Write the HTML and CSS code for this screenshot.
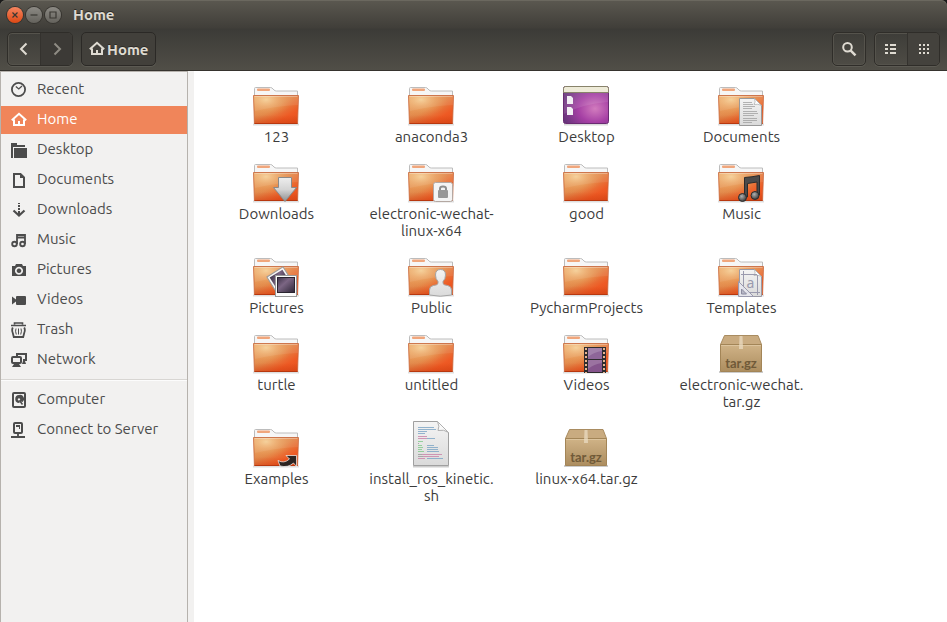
FILE: index.html
```
<!DOCTYPE html>
<html lang="en">
<head>
    <meta charset="UTF-8">
    <meta name="viewport" content="width=device-width, initial-scale=1.0">
    <title>Home</title>
    <link rel="stylesheet" href="styles.css">
</head>
<body>
    <!-- Shared icon parts -->
    <svg class="defs" width="0" height="0" aria-hidden="true">
        <defs>
            <linearGradient id="front" x1="0" y1="0" x2="1" y2="1">
                <stop offset="0" stop-color="#e9a263"/>
                <stop offset=".45" stop-color="#e2884a"/>
                <stop offset=".75" stop-color="#ee5a24"/>
                <stop offset="1" stop-color="#e4501c"/>
            </linearGradient>
            <radialGradient id="glow" cx=".28" cy=".15" r=".6">
                <stop offset="0" stop-color="#f8dca4" stop-opacity=".8"/>
                <stop offset="1" stop-color="#f0a050" stop-opacity="0"/>
            </radialGradient>
            <linearGradient id="shade" x1="0" y1="0" x2="0" y2="1">
                <stop offset=".7" stop-color="#d03c0c" stop-opacity="0"/>
                <stop offset="1" stop-color="#cc3c10" stop-opacity=".5"/>
            </linearGradient>
            <linearGradient id="paper" x1="0" y1="0" x2="0" y2="1">
                <stop offset="0" stop-color="#f4f4f4"/>
                <stop offset="1" stop-color="#dadada"/>
            </linearGradient>
            <linearGradient id="metal" x1="0" y1="0" x2="0" y2="1">
                <stop offset="0" stop-color="#eeeeee"/>
                <stop offset=".5" stop-color="#d4d4d4"/>
                <stop offset="1" stop-color="#8e8e8e"/>
            </linearGradient>
            <radialGradient id="purple" cx=".7" cy=".6" r=".75">
                <stop offset="0" stop-color="#d27cbe"/>
                <stop offset=".5" stop-color="#a53fa4"/>
                <stop offset="1" stop-color="#66347a"/>
            </radialGradient>
            <linearGradient id="photo" x1="0" y1="0" x2="1" y2="1">
                <stop offset="0" stop-color="#3c3246"/>
                <stop offset=".4" stop-color="#7c6684"/>
                <stop offset="1" stop-color="#2c2636"/>
            </linearGradient>
            <linearGradient id="carton" x1="0" y1="0" x2="0" y2="1">
                <stop offset="0" stop-color="#d0b387"/>
                <stop offset="1" stop-color="#ac8d5f"/>
            </linearGradient>
            <radialGradient id="bead" cx=".4" cy=".35" r=".6">
                <stop offset="0" stop-color="#b0b0b0"/>
                <stop offset="1" stop-color="#454545"/>
            </radialGradient>
        </defs>

        <symbol id="folder" viewBox="0 0 48 48">
            <path d="M1 46.500h46" stroke="#000" stroke-opacity=".13" stroke-width="2"/>
            <path d="M2.500 18V10.500q0-1 1-1H18.500q1.500 0 2.500 1.500l1 1q1 1 2.500 1H45.500V18z" fill="#f6f6f6" stroke="#bcbcbc"/>
            <rect x="5" y="10.500" width="13" height="2.500" rx="1" fill="#f0a67c"/>
            <path d="M1.500 17.500h45L45.600 45.500H2.400z" fill="url(#front)"/>
            <path d="M1.500 17.500h45L45.600 45.500H2.400z" fill="url(#glow)"/>
            <path d="M1.500 17.500h45L45.600 45.500H2.400z" fill="url(#shade)" stroke="#c8673c" stroke-opacity=".8"/>
            <path d="M2 18h44v9Q24 28 3 33z" fill="#fff" fill-opacity=".08"/>
            <path d="M2.500 18.500h43" stroke="#fff" stroke-opacity=".3"/>
            <path d="M2.500 45.500h43" stroke="#b8380f"/>
        </symbol>

        <symbol id="box" viewBox="0 0 48 48">
            <path d="M2 46h44" stroke="#000" stroke-opacity=".2" stroke-width="2"/>
            <path d="M7.500 9.500h33.500l3.500 9H3.500z" fill="#c9ab80" stroke="#a98c61"/>
            <path d="M3.500 18.500h41V45.500h-41z" fill="url(#carton)" stroke="#a38557"/>
            <path d="M4 19.500h40" stroke="#dcc49e"/>
            <path d="M22.500 10h3l.5 13h-4z" fill="#eadbc2" fill-opacity=".75"/>
        </symbol>

        <symbol id="house" viewBox="0 0 16 16">
            <path d="M.8 8.300L8 1.800l7.200 6.500M3 7.500V13h10V7.500" fill="none" stroke="currentColor" stroke-width="2"/>
            <path d="M7 13V9h2v4z" fill="currentColor"/>
        </symbol>
    </svg>

    <div class="window">
        <header class="header">
            <div class="titlebar">
                <button class="wm wm-close" aria-label="Close"><svg viewBox="0 0 16 16"><path d="M5.500 5.500l5 5M10.500 5.500l-5 5"/></svg></button>
                <button class="wm" aria-label="Minimize"><svg viewBox="0 0 16 16"><path d="M4.500 8h7"/></svg></button>
                <button class="wm" aria-label="Maximize"><svg viewBox="0 0 16 16"><path d="M5 5h6v6H5z"/></svg></button>
                <h1>Home</h1>
            </div>
            <div class="toolbar">
                <div class="group">
                    <button class="tool" aria-label="Back"><svg viewBox="0 0 16 16"><path d="M10.500 2.500L5 8l5.500 5.500" fill="none" stroke="currentColor" stroke-width="2"/></svg></button>
                    <button class="tool dim" aria-label="Forward"><svg viewBox="0 0 16 16"><path d="M5.500 2.500L11 8l-5.500 5.500" fill="none" stroke="currentColor" stroke-width="2"/></svg></button>
                </div>
                <button class="path"><svg viewBox="0 0 16 16"><use href="#house"/></svg>Home</button>
                <div class="group search">
                    <button class="tool" aria-label="Search"><svg viewBox="0 0 16 16"><circle cx="6.500" cy="6.200" r="4.300" fill="none" stroke="currentColor" stroke-width="2"/><path d="M9.500 9.300l5 5" stroke="currentColor" stroke-width="2.400"/></svg></button>
                </div>
                <div class="group">
                    <button class="tool" aria-label="List view"><svg viewBox="0 0 16 16"><path d="M2 3h3v2H2zM7 3h6v2H7zM2 7h3v2H2zM7 7h6v2H7zM2 11h3v2H2zM7 11h6v2H7z" fill="currentColor"/></svg></button>
                    <button class="tool active" aria-label="Icon view"><svg viewBox="0 0 16 16"><path d="M3 3h2v2H3zM7 3h2v2H7zM11 3h2v2h-2zM3 7h2v2H3zM7 7h2v2H7zM11 7h2v2h-2zM3 11h2v2H3zM7 11h2v2H7zM11 11h2v2h-2z" fill="currentColor"/></svg></button>
                </div>
            </div>
        </header>

        <div class="main">
            <nav class="sidebar">
                <a href="#"><svg viewBox="0 0 16 16"><circle cx="7.500" cy="7.500" r="6.600" fill="none" stroke="currentColor" stroke-width="1.800"/><path d="M4.800 4.500l3 2.500 3.200-3" fill="none" stroke="currentColor" stroke-width="1.300"/></svg>Recent</a>
                <a href="#" class="selected"><svg viewBox="0 0 16 16"><use href="#house"/></svg>Home</a>
                <a href="#"><svg viewBox="0 0 16 16"><path d="M0 1h6v2h8v2H2v11H0zM3 6h13v10H3z" fill="currentColor"/></svg>Desktop</a>
                <a href="#"><svg viewBox="0 0 16 16"><path d="M3 2h6.500L13 5.500V15H3z" fill="none" stroke="currentColor" stroke-width="2"/><path d="M9 2v4h4z" fill="currentColor"/></svg>Documents</a>
                <a href="#"><svg viewBox="0 0 16 16"><path d="M7 1h2v1H7zM7 3h2v2H7zM7 6h2v2H7zM7 9h2v4H7z" fill="currentColor"/><path d="M2.500 8.500L8 13.500l5.500-5" fill="none" stroke="currentColor" stroke-width="2.200"/></svg>Downloads</a>
                <a href="#"><svg viewBox="0 0 16 16"><path d="M6 12V3h8v9M6 5.500h8" fill="none" stroke="currentColor" stroke-width="1.800"/><circle cx="3.500" cy="12" r="2.300" fill="none" stroke="currentColor" stroke-width="1.900"/><circle cx="11.500" cy="12" r="2.300" fill="none" stroke="currentColor" stroke-width="1.900"/></svg>Music</a>
                <a href="#"><svg viewBox="0 0 16 16"><path fill-rule="evenodd" d="M1 4h3l1-2h6l1 2h3v10H1zM8 4.800a4 4 0 1 0 .01 0zM8 6.500a2.300 2.300 0 1 1-.01 0z" fill="currentColor"/></svg>Pictures</a>
                <a href="#"><svg viewBox="0 0 16 16"><path d="M1 4.500l4 3V5q0-1 1-1h8q1 0 1 1v7q0 1-1 1H6q-1 0-1-1V9.500l-4 3z" fill="currentColor"/></svg>Videos</a>
                <a href="#"><svg viewBox="0 0 16 16"><path d="M3.500 2.500V1h8v1.500M0 3.500h15" fill="none" stroke="currentColor" stroke-width="1.600"/><path d="M1.800 5.500Q.5 8 1.800 11l1 4h9.400l1-4q1.300-3 0-5.500" fill="none" stroke="currentColor" stroke-width="1.800"/><path d="M5 6.500q-1 2.500 .3 6M7.500 6.500v6M10 6.500q1 2.500-.3 6" fill="none" stroke="currentColor"/></svg>Trash</a>
                <a href="#"><svg viewBox="0 0 16 16"><path d="M6 4V2h9v6h-3" fill="none" stroke="currentColor" stroke-width="2"/><path d="M12 9h2l1 3h-4z" fill="currentColor"/><rect x="1" y="5" width="9" height="6" rx="1" fill="none" stroke="currentColor" stroke-width="2"/><path d="M3 12h5l2 3H1z" fill="currentColor"/></svg>Network</a>
                <hr>
                <a href="#"><svg viewBox="0 0 16 16"><rect x="2" y="1" width="12" height="14" rx="1" fill="none" stroke="currentColor" stroke-width="2"/><path fill-rule="evenodd" d="M8 3a4 4 0 1 0 .5 8V9l3 1A4 4 0 0 0 8 3zM8 6.200a1.200 1.200 0 1 1-.01 0z" fill="currentColor"/><path d="M8.500 8.500l3 4" stroke="currentColor" stroke-width="1.500"/></svg>Computer</a>
                <a href="#"><svg viewBox="0 0 16 16"><rect x="3" y="1" width="8" height="10" rx="1" fill="none" stroke="currentColor" stroke-width="2"/><path d="M5 4h4M8 6h1M7 11v3M0 15h14" fill="none" stroke="currentColor" stroke-width="1.800"/></svg>Connect to Server</a>
            </nav>

            <main class="files">
                <a href="#" class="file"><svg viewBox="0 0 48 48"><use href="#folder"/></svg><span>123</span></a>
                <a href="#" class="file"><svg viewBox="0 0 48 48"><use href="#folder"/></svg><span>anaconda3</span></a>
                <a href="#" class="file">
                    <svg viewBox="0 0 48 48">
                        <path d="M2 46.500h44" stroke="#000" stroke-opacity=".15" stroke-width="2"/>
                        <rect x="1.500" y="8.500" width="45" height="37" rx="2" fill="url(#purple)" stroke="#6a2b72"/>
                        <path d="M2 14h44v10Q20 26 2 36z" fill="#fff" fill-opacity=".1"/>
                        <path d="M1.500 14.500v-4q0-2 2-2h41q2 0 2 2v4z" fill="#eeebd8" stroke="#88836a"/>
                        <path d="M5 18h4l2 2v6H5zM5 29h4l2 2v6H5z" fill="#f2eef4"/>
                    </svg>
                    <span>Desktop</span>
                </a>
                <a href="#" class="file">
                    <svg viewBox="0 0 48 48">
                        <use href="#folder"/>
                        <path d="M22.500 20.500h15l7 7v20h-22z" fill="url(#paper)" stroke="#999"/>
                        <path d="M37.500 20.500q1.500 4-.5 6 4-1 7.500 1z" fill="#fff" stroke="#aaa" stroke-width=".7"/>
                        <path d="M26 24.500h9M26 26.500h10M26 28.500h12M26 30.500h9M26 33.500h14M26 35.500h15M26 37.500h11M26 40.500h14M26 42.500h14M26 44.500h9" stroke="#999" stroke-opacity=".8" stroke-width=".9"/>
                    </svg>
                    <span>Documents</span>
                </a>

                <a href="#" class="file">
                    <svg viewBox="0 0 48 48">
                        <use href="#folder"/>
                        <path d="M26.500 22.500h13v10h5L33 46.500 21.500 32.500h5z" fill="url(#metal)" stroke="#8a8a8a"/>
                    </svg>
                    <span>Downloads</span>
                </a>
                <a href="#" class="file">
                    <svg viewBox="0 0 48 48">
                        <use href="#folder"/>
                        <rect x="26.500" y="27.500" width="19" height="19" rx="2" fill="#f4f4f4" stroke="#b4a8a2"/>
                        <path d="M33 36v-2.500q0-2 3-2t3 2V36" fill="none" stroke="#8e8e8e" stroke-width="2"/>
                        <rect x="31" y="35" width="10" height="8" rx="1" fill="#979797"/>
                    </svg>
                    <span>electronic-wechat-<wbr>linux-x64</span>
                </a>
                <a href="#" class="file"><svg viewBox="0 0 48 48"><use href="#folder"/></svg><span>good</span></a>
                <a href="#" class="file">
                    <svg viewBox="0 0 48 48">
                        <use href="#folder"/>
                        <path d="M27.500 42V22.500Q35 22 42.500 20.500V40h-2.500V27l-9.500 1.500V42z" fill="#4a4a4a" stroke="#2c2c2c"/>
                        <circle cx="25.500" cy="42.500" r="4" fill="url(#bead)" stroke="#2c2c2c"/>
                        <circle cx="38" cy="40.500" r="4" fill="url(#bead)" stroke="#2c2c2c"/>
                    </svg>
                    <span>Music</span>
                </a>

                <a href="#" class="file">
                    <svg viewBox="0 0 48 48">
                        <use href="#folder"/>
                        <g transform="rotate(-32 28 31)">
                            <rect x="18.500" y="21.500" width="19" height="20" fill="#f6f6f6" stroke="#999"/>
                            <rect x="20.500" y="23.500" width="15" height="14" fill="url(#photo)"/>
                        </g>
                        <rect x="23.500" y="26.500" width="21" height="21" fill="#fafafa" stroke="#999"/>
                        <rect x="25.500" y="28.500" width="17" height="15" fill="url(#photo)" stroke="#2a2430"/>
                    </svg>
                    <span>Pictures</span>
                </a>
                <a href="#" class="file">
                    <svg viewBox="0 0 48 48">
                        <use href="#folder"/>
                        <path d="M22.500 46v-5q0-4 4-4.500 4-.5 4.500-2v-2Q28.500 30 28.500 26q0-5.500 5-5.500t5 5.500q0 4-2.500 6.500v2q.500 1.500 4.500 2 4 .5 4 4.500v5Q33 48.500 22.500 46z" fill="url(#paper)" stroke="#a5a5a5"/>
                    </svg>
                    <span>Public</span>
                </a>
                <a href="#" class="file"><svg viewBox="0 0 48 48"><use href="#folder"/></svg><span>PycharmProjects</span></a>
                <a href="#" class="file">
                    <svg viewBox="0 0 48 48">
                        <use href="#folder"/>
                        <path d="M22.500 20.500h15l7 7v20h-22z" fill="url(#paper)" stroke="#9a9aa6"/>
                        <path d="M37.500 20.500q1.500 4-.5 6 4-1 7.500 1z" fill="#fff" stroke="#aaa" stroke-width=".7"/>
                        <path d="M24 25.500h16M26.500 22v24M40.500 26v20M24 43.500h19" stroke="#9a9aae"/>
                        <text x="33.500" y="39" text-anchor="middle" class="template-text">a</text>
                        <path d="M21.500 32.500v15h15z" fill="#e6e6ee" fill-opacity=".85" stroke="#9a9aae"/>
                        <path d="M24.500 40v5h5z" fill="#b8b8c8" stroke="#8c8ca0"/>
                    </svg>
                    <span>Templates</span>
                </a>

                <a href="#" class="file"><svg viewBox="0 0 48 48"><use href="#folder"/></svg><span>turtle</span></a>
                <a href="#" class="file"><svg viewBox="0 0 48 48"><use href="#folder"/></svg><span>untitled</span></a>
                <a href="#" class="file">
                    <svg viewBox="0 0 48 48">
                        <use href="#folder"/>
                        <rect x="22" y="21" width="22" height="26" fill="#2e2c2e"/>
                        <path d="M24 22v25M42 22v25" stroke="#e8b490" stroke-width="2" stroke-dasharray="2 2"/>
                        <rect x="26" y="22" width="14" height="11" fill="#8e6699"/>
                        <rect x="26" y="34" width="14" height="12" fill="#85548c"/>
                        <path d="M26 22h14v3q-8 1-14 6zM26 34h14v3q-8 1-14 6z" fill="#fff" fill-opacity=".18"/>
                    </svg>
                    <span>Videos</span>
                </a>
                <a href="#" class="file">
                    <svg viewBox="0 0 48 48">
                        <use href="#box"/>
                        <text x="24" y="42" text-anchor="middle" class="box-text">tar.gz</text>
                    </svg>
                    <span>electronic-wechat.<wbr>tar.gz</span>
                </a>

                <a href="#" class="file">
                    <svg viewBox="0 0 48 48">
                        <use href="#folder"/>
                        <path d="M34 35.500H44.500V46.500L41.500 43Q36 48 28 46L26 40.500Q32 44 37.500 39z" fill="#2c2522" stroke="#fff" stroke-opacity=".85" stroke-width=".8"/>
                    </svg>
                    <span>Examples</span>
                </a>
                <a href="#" class="file">
                    <svg viewBox="0 0 48 48">
                        <path d="M6 46.500h36" stroke="#000" stroke-opacity=".2" stroke-width="2"/>
                        <path d="M6.500 1.500h24l11 11v33h-35z" fill="url(#paper)" stroke="#a0a0a0"/>
                        <path d="M30.500 1.500q2.500 5 .5 9 6-1.500 10.500 2z" fill="#fafafa" stroke="#b0b0b0"/>
                        <g stroke-opacity=".8">
                            <path d="M11 7.500h16M11 9.500h18M11 11.500h9M11 13.500h7M20 18.500h8M20 25.500h7M20 27.500h11M20 29.500h11M20 31.500h12M20 38.500h16" stroke="#7ba4c4"/>
                            <path d="M11 16.500h9M11 18.500h9M15 34.500h20M16 36.500h16M11 38.500h7" stroke="#c981a8"/>
                            <path d="M11 21.500h5M11 25.500h4M11 27.500h5M11 29.500h4M11 31.500h6" stroke="#7fc98a"/>
                            <path d="M11 23.500h1M11 34.500h4M11 36.500h5" stroke="#999"/>
                        </g>
                    </svg>
                    <span>install_ros_kinetic.<wbr>sh</span>
                </a>
                <a href="#" class="file">
                    <svg viewBox="0 0 48 48">
                        <use href="#box"/>
                        <text x="24" y="42" text-anchor="middle" class="box-text">tar.gz</text>
                    </svg>
                    <span>linux-x64.tar.gz</span>
                </a>
            </main>
        </div>
    </div>
</body>
</html>
```
FILE: styles.css
```
* {
    margin: 0;
    padding: 0;
    box-sizing: border-box;
}

body {
    font-family: Ubuntu, "Noto Sans", sans-serif;
    font-size: 15px;
    line-height: 17px;
    color: #3c3c3c;
    background: #1a1a1a;
}

a {
    color: inherit;
    text-decoration: none;
}

button {
    font: inherit;
    color: inherit;
    background: none;
    border: none;
}

.defs {
    position: absolute;
}

.window {
    display: flex;
    flex-direction: column;
    min-height: 100vh;
}

/* Title bar and toolbar */
.header {
    color: #dfdbd2;
    background: linear-gradient(#5b5850, #403e39 28px, #3c3b37 29px, #504e47);
    border-radius: 6px 6px 0 0;
    border-bottom: 1px solid #36332e;
    box-shadow: inset 0 1px #6b685f;
}

.titlebar {
    display: flex;
    align-items: center;
    gap: 3px;
    height: 29px;
    padding: 0 7px;
}

.titlebar h1 {
    margin-left: 9px;
    font-size: 15px;
    text-shadow: 0 -1px #2c2a26;
}

.wm {
    width: 16px;
    height: 16px;
    border-radius: 50%;
    background: linear-gradient(#8c8a84, #64625c);
    box-shadow: 0 0 0 1px #36342f;
}

.wm-close {
    background: linear-gradient(#f58560, #dd4814);
}

.wm svg {
    display: block;
    fill: none;
    stroke: #3a3833;
    stroke-width: 1.2;
}

.toolbar {
    display: flex;
    align-items: center;
    padding: 3px 7px 4px;
}

.group {
    display: flex;
    border: 1px solid #2f2d29;
    border-radius: 5px;
    box-shadow: inset 0 0 0 1px #55534c, 0 1px #5c5a53;
}

.tool {
    display: flex;
    align-items: center;
    justify-content: center;
    width: 32px;
    height: 32px;
}

.tool svg,
.path svg {
    width: 16px;
    height: 16px;
}

.tool + .tool {
    border-left: 1px solid #34322e;
}

.dim {
    color: #8f8c84;
    background: #3c3a36;
    border-radius: 0 4px 4px 0;
}

.active {
    background: #44423d;
    border-radius: 0 4px 4px 0;
}

.path {
    display: flex;
    align-items: center;
    gap: 2px;
    height: 34px;
    margin-left: 8px;
    padding: 0 7px;
    font-weight: bold;
    text-shadow: 0 -1px #2c2a26;
    background: #42403b;
    border: 1px solid #2b2926;
    border-radius: 5px;
    box-shadow: 0 1px #5c5a53;
}

.search {
    margin-left: auto;
    margin-right: 8px;
}

/* Places */
.main {
    display: flex;
    flex: 1;
    background: #f2f1f0;
}

.sidebar {
    display: flex;
    flex-direction: column;
    gap: 2px;
    width: 188px;
    margin-right: 6px;
    padding-top: 4px;
    color: #4c4c4c;
    border: 1px solid #b6b2ad;
    border-bottom: none;
}

.sidebar a {
    display: flex;
    align-items: flex-start;
    gap: 10px;
    height: 28px;
    padding-left: 10px;
    line-height: 26px;
}

.sidebar svg {
    width: 16px;
    height: 16px;
    margin-top: 6px;
}

.sidebar .selected {
    color: #fff;
    background: #f0855a;
}

.sidebar hr {
    height: 2px;
    margin: 3px 0;
    border: none;
    border-top: 1px solid #d8d6d3;
    background: #fcfcfc;
}

/* Icon view */
.files {
    flex: 1;
    display: grid;
    grid-template-columns: repeat(auto-fill, 155px);
    align-content: start;
    row-gap: 10px;
    padding: 7px 0 10px 5px;
    background: #fff;
}

.file {
    display: flex;
    flex-direction: column;
    align-items: center;
    gap: 2px;
    text-align: center;
}

.file svg {
    width: 48px;
    height: 48px;
    margin-right: 1px;
}

.file span {
    max-width: 134px;
}

.box-text {
    font: bold 13px Lato, sans-serif;
    fill: #705a38;
}

.template-text {
    font: 14px "Noto Sans", sans-serif;
    fill: #9a9aae;
}
```
